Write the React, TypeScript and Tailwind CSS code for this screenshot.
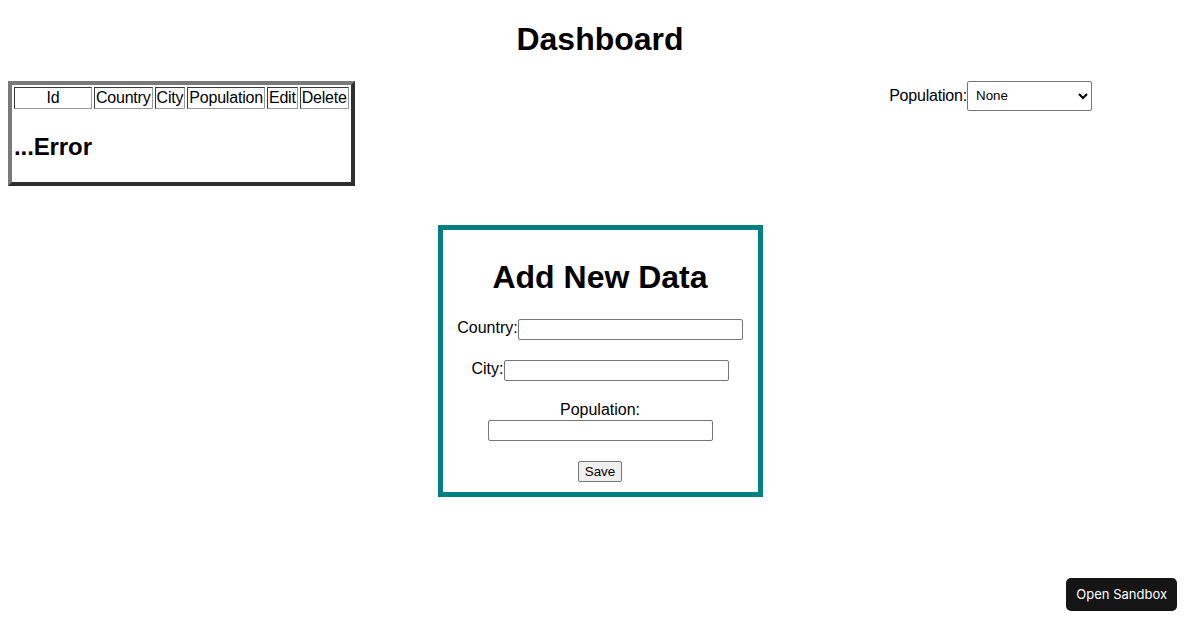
import { useState } from "react"

const headers = ["Id", "Country", "City", "Population", "Edit", "Delete"]

function DataTable() {
  return (
    <table className="mt-px border-separate border-spacing-[2px] border-4 border-t-[#7a7a7a] border-l-[#7a7a7a] border-b-[#2e2e2e] border-r-[#2e2e2e]">
      <tbody>
        <tr>
          {headers.map((h) => (
            <td
              key={h}
              className="border border-t-[#3a3a3a] border-l-[#3a3a3a] border-b-[#9a9a9a] border-r-[#9a9a9a] p-px text-center leading-[18.4px] tracking-[-0.2px]"
            >
              {h}
            </td>
          ))}
        </tr>
        <tr>
          <td className="p-0">
            <h2 className="mt-[21.9px] mb-[18.9px] text-left text-[24px] font-bold leading-[27.6px] tracking-[-0.1px]">
              ...Error
            </h2>
          </td>
        </tr>
      </tbody>
    </table>
  )
}

function PopulationFilter() {
  const [value, setValue] = useState("none")
  return (
    <div className="mt-px mr-[100px] flex items-center">
      <label className="leading-[18.4px] tracking-[-0.2px]">Population:</label>
      <select
        value={value}
        onChange={(e) => setValue(e.target.value)}
        className="h-[30px] w-[125px] rounded-[2px] border border-[#767676] bg-white pl-1 text-[13.33px] text-black"
      >
        <option value="none">None</option>
        <option value="asc">Ascending</option>
        <option value="desc">Descending</option>
      </select>
    </div>
  )
}

function AddForm() {
  return (
    <form
      onSubmit={(e) => e.preventDefault()}
      className="mx-auto mt-[39px] flex w-[325px] flex-col items-center border-[5px] border-[#008080] px-2 pb-[10px]"
    >
      <h1 className="mt-[29px] text-[32px] font-bold leading-[37px]">Add New Data</h1>
      <div className="mt-[23px] flex h-[21px] items-center">
        <label className="pb-[2px] leading-[18.4px]">Country:</label>
        <input className="h-[21px] w-[225px] rounded-[2px] border border-[#767676] px-0.5 text-[13.33px]" />
      </div>
      <div className="mt-[20px] flex h-[21px] items-center">
        <label className="pb-[2px] leading-[18.4px]">City:</label>
        <input className="h-[21px] w-[225px] rounded-[2px] border border-[#767676] px-0.5 text-[13.33px]" />
      </div>
      <label className="mt-[20px] leading-[18.4px]">Population:</label>
      <input className="mt-px h-[21px] w-[225px] rounded-[2px] border border-[#767676] px-0.5 text-[13.33px]" />
      <button
        type="submit"
        className="mt-[20px] h-[21px] rounded-[2px] border border-[#767676] bg-[#efefef] px-1.5 text-[13.33px] leading-[15px]"
      >
        Save
      </button>
    </form>
  )
}

export default function App() {
  return (
    <div className="relative min-h-[630px] bg-white font-['Liberation_Sans',Arial,sans-serif] text-[16px] text-black">
      <h1 className="pt-[21.44px] text-center text-[32px] font-bold leading-[37px]">Dashboard</h1>
      <div className="mt-[21.44px] flex items-start justify-between px-2">
        <DataTable />
        <PopulationFilter />
      </div>
      <AddForm />
      <button className="fixed bottom-[19px] right-[23px] flex h-[33px] items-center rounded-[5px] bg-[#151515] px-[10px] font-['Inter',sans-serif] text-[13px] text-white">
        Open Sandbox
      </button>
    </div>
  )
}
